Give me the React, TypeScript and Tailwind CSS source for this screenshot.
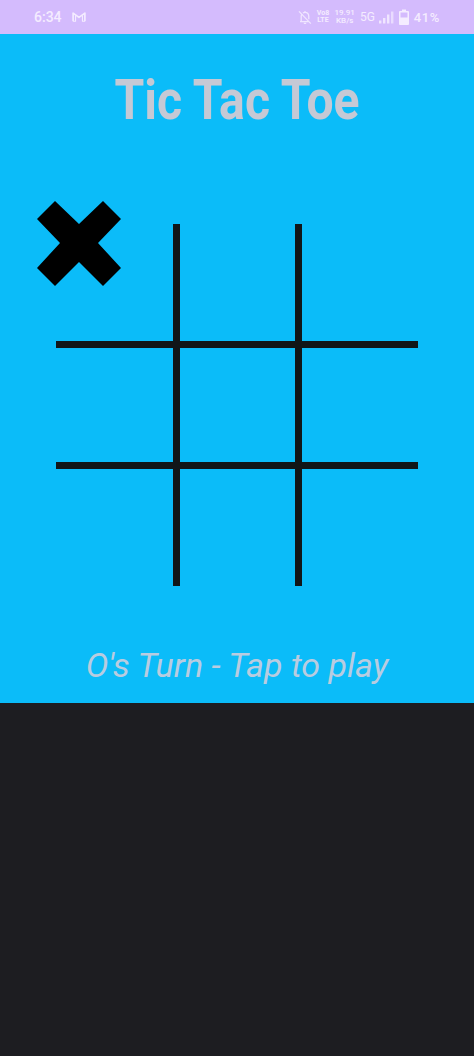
import React from "react";

const font = { fontFamily: "Roboto, sans-serif" };

function MailIcon() {
  return (
    <svg width="14" height="12" viewBox="0 0 15 12" fill="none" stroke="#f4ecff" strokeWidth="1.8" strokeLinejoin="round">
      <path d="M1.2 10.5V1.8L7.5 6.4L13.8 1.8V10.5" />
      <path d="M1.2 10.5H3.8V4.2M13.8 10.5H11.2V4.2" strokeWidth="1.2" />
    </svg>
  );
}

function BellOff() {
  return (
    <svg width="14" height="15" viewBox="0 0 14 15" fill="none" stroke="#f0e6ff" strokeWidth="1.3">
      <path d="M3.2 11.5V6.6C3.2 5.6 3.5 4.8 4 4.2M5 2.9C5.5 2.5 6.2 2.3 7 2.3C9.3 2.3 10.8 4.1 10.8 6.5V9.2M2 11.6H10.5M5.8 13.3H8.2M7 1V2.3" />
      <path d="M1 1.4L12.8 13.6" />
    </svg>
  );
}

function Signal() {
  return (
    <svg width="15" height="13" viewBox="0 0 15 13" fill="#f0e6ff">
      <rect x="0" y="9.5" width="2.4" height="3" />
      <rect x="4" y="7" width="2.4" height="5.5" />
      <rect x="8" y="3.5" width="2.4" height="9" />
      <rect x="12" y="0.5" width="2.4" height="12" opacity="0.75" />
    </svg>
  );
}

function Battery() {
  return (
    <svg width="10" height="16" viewBox="0 0 10 16">
      <path d="M3 0.5H7V2H9C9.5 2 10 2.5 10 3V15C10 15.5 9.5 16 9 16H1C0.5 16 0 15.5 0 15V3C0 2.5 0.5 2 1 2H3Z" fill="#f4ecff" />
      <rect x="1.5" y="3.5" width="7" height="5" fill="#d4bbfd" />
    </svg>
  );
}

function CrossMark() {
  return (
    <svg width="84" height="85" viewBox="0 0 84 85" fill="#000000" className="absolute left-[-19px] top-[-23px]">
      <polygon points="0,18 18,0 42,23 66,0 84,18 61,42 84,67 66,85 42,61 18,85 0,67 23,42" />
    </svg>
  );
}

export default function App() {
  return (
    <div className="w-[474px] h-[1056px] flex flex-col bg-[#1d1d21]" style={font}>
      <div className="h-[34px] bg-[#d4bbfd] flex items-center justify-between pl-[34px] pr-[34px] text-[#f4ecff] shrink-0">
        <div className="flex items-center gap-[10px]">
          <span className="text-[14px] font-medium leading-none">6:34</span>
          <MailIcon />
        </div>
        <div className="flex items-center">
          <BellOff />
          <div className="ml-[5px] w-[13px] flex flex-col items-center text-[7px] font-bold leading-[7px]">
            <span>Vo8</span>
            <span>LTE</span>
          </div>
          <div className="ml-[5px] flex flex-col items-center text-[8px] font-medium leading-[8px]">
            <span>19.91</span>
            <span>KB/s</span>
          </div>
          <span className="ml-[5px] text-[12px] leading-none">5G</span>
          <span className="ml-[4px] flex"><Signal /></span>
          <span className="ml-[5px] flex"><Battery /></span>
          <span className="ml-[5px] text-[13px] font-medium leading-none tracking-[0.6px]">41%</span>
        </div>
      </div>

      <div className="h-[669px] bg-[#0bbcf9] flex flex-col items-center shrink-0">
        <h1 className="mt-[30px] h-[72px] text-[55px] leading-[72px] font-bold text-[#c5c9d5] scale-x-[0.875] whitespace-nowrap">Tic Tac Toe</h1>
        <div className="mt-[88px] w-[362px] h-[362px] grid grid-cols-[117px_7px_115px_7px_116px] grid-rows-[117px_7px_114px_7px_117px]">
          <div className="col-start-1 row-start-1 relative">
            <CrossMark />
          </div>
          <div className="col-start-2 row-start-1 row-span-5 bg-[#111618]" />
          <div className="col-start-4 row-start-1 row-span-5 bg-[#111618]" />
          <div className="col-start-1 col-span-5 row-start-2 bg-[#111618]" />
          <div className="col-start-1 col-span-5 row-start-4 bg-[#111618]" />
        </div>
        <p className="mt-[55px] text-[34px] leading-[48px] italic font-normal text-[#b9cce0] whitespace-nowrap">O's Turn - Tap to play</p>
      </div>

      <div className="flex-1 bg-[#1d1d21]" />
    </div>
  );
}
